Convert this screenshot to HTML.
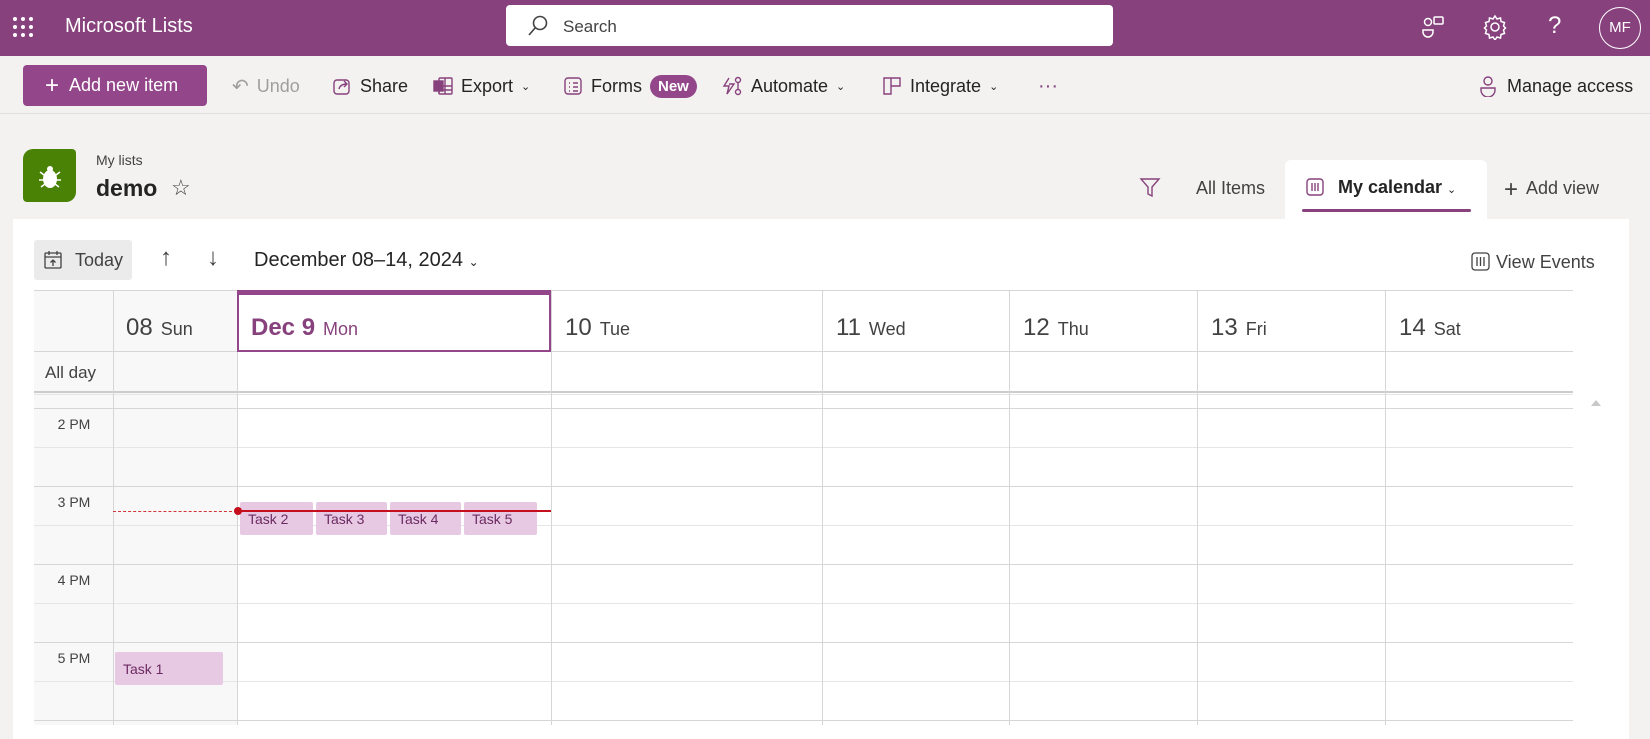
<!DOCTYPE html>
<html><head><meta charset="utf-8"><style>
*{box-sizing:border-box;margin:0;padding:0}
body{width:1650px;height:725px;overflow:hidden;background:#f3f2f1;font-family:"Liberation Sans",sans-serif;color:#242424;position:relative}
.a{position:absolute}
.hdr{left:0;top:0;width:1650px;height:56px;background:#87417c}
.tb{left:0;top:56px;width:1650px;height:58px;background:#f3f2f1;border-bottom:1px solid #e1dfdd}
.ti{top:72px;font-size:18px;color:#242424;display:flex;align-items:center;gap:8px;height:28px}
.panel{left:13px;top:219px;width:1616px;height:520px;background:#fff}
.hl{height:1px;background:#d6d6d6}
.vl{width:1px;background:#d6d6d6}
.day{top:314px;font-size:24px;color:#424242}
.day span{font-size:18px;margin-left:8px}
.tm{font-size:14px;color:#424242;width:80px;text-align:center;left:34px}
.task{background:#e8c9e3;color:#6b2a62;font-size:14px;padding:9px 0 0 8px;height:33px;border-radius:2px}
</style></head><body>
<div class="a hdr"></div>
<svg class="a" style="left:12px;top:16px" width="22" height="22"><g fill="#fff"><circle cx="3" cy="3" r="2"/><circle cx="11" cy="3" r="2"/><circle cx="19" cy="3" r="2"/><circle cx="3" cy="11" r="2"/><circle cx="11" cy="11" r="2"/><circle cx="19" cy="11" r="2"/><circle cx="3" cy="19" r="2"/><circle cx="11" cy="19" r="2"/><circle cx="19" cy="19" r="2"/></g></svg>
<div class="a" style="left:65px;top:15px;color:#fff;font-size:20px">Microsoft Lists</div>
<div class="a" style="left:506px;top:5px;width:607px;height:41px;background:#fff;border-radius:4px"></div>
<svg class="a" style="left:527px;top:15px" width="22" height="22" fill="none" stroke="#424242" stroke-width="1.6"><circle cx="13" cy="8" r="6.5"/><path d="M8.5 12.5 2 20"/></svg>
<div class="a" style="left:563px;top:17px;font-size:17px;color:#424242">Search</div>
<svg class="a" style="left:1421px;top:14px" width="26" height="26" fill="none" stroke="#fff" stroke-width="1.5"><circle cx="7" cy="8" r="3.5"/><path d="M2 16h10v2a5 5 0 0 1-10 0z"/><rect x="13" y="3" width="9" height="7" rx="1"/></svg>
<svg class="a" style="left:1482px;top:14px" width="26" height="26" fill="none" stroke="#fff" stroke-width="1.5"><circle cx="13" cy="13" r="4"/><path d="M13 2l2 3 3.5-1 .5 3.5 3.5 1-1 3.5 2 2-2 2 1 3.5-3.5 1-.5 3.5-3.5-1-2 3-2-3-3.5 1-.5-3.5-3.5-1 1-3.5-2-2 2-2-1-3.5 3.5-1 .5-3.5 3.5 1z"/></svg>
<div class="a" style="left:1548px;top:12px;color:#fff;font-size:24px">?</div>
<div class="a" style="left:1599px;top:7px;width:42px;height:42px;border:1.5px solid #fff;border-radius:50%;color:#fff;font-size:15px;text-align:center;line-height:39px">MF</div>

<div class="a tb"></div>
<div class="a" style="left:23px;top:65px;width:184px;height:41px;background:#93468a;border-radius:4px;color:#fff;font-size:18px;line-height:41px;padding-left:22px"><span style="font-size:24px;vertical-align:-2px;margin-right:10px">+</span>Add new item</div>
<div class="a ti" style="left:232px;color:#a19f9d"><span style="font-size:20px">↶</span>Undo</div>
<div class="a ti" style="left:332px"><svg width="20" height="20" fill="none" stroke="#87417c" stroke-width="1.4"><rect x="2" y="4" width="15" height="14" rx="3"/><path d="M7 13c1-4 4-5 8-5M12 5l3 3-3 3"/></svg>Share</div>
<div class="a ti" style="left:433px"><svg width="20" height="20" fill="none" stroke="#87417c" stroke-width="1.4"><rect x="6" y="2" width="13" height="16" rx="1"/><rect x="1" y="5" width="9" height="10" fill="#87417c"/><path d="M6 6v12M12 2v16M6 10h13M6 14h13"/></svg>Export <span style="font-size:11px">⌄</span></div>
<div class="a ti" style="left:563px"><svg width="20" height="20" fill="none" stroke="#87417c" stroke-width="1.4"><rect x="2" y="2" width="16" height="16" rx="3"/><path d="M6 7h1M10 7h5M6 11h1M10 11h5M6 15h1M10 15h5"/></svg>Forms<span style="background:#93468a;color:#fff;font-size:15px;font-weight:bold;border-radius:12px;padding:3px 8px">New</span></div>
<div class="a ti" style="left:721px"><svg width="22" height="20" fill="none" stroke="#87417c" stroke-width="1.4"><path d="M8 2 3 10h5l-2 8 7-10H8"/><circle cx="17" cy="4" r="2.5"/><circle cx="17" cy="16" r="2.5"/><path d="M17 7v6"/></svg>Automate <span style="font-size:11px">⌄</span></div>
<div class="a ti" style="left:882px"><svg width="20" height="20" fill="none" stroke="#87417c" stroke-width="1.4"><path d="M2 2h7v16H2zM9 2h9v8H9z"/></svg>Integrate <span style="font-size:11px">⌄</span></div>
<div class="a ti" style="left:1038px;color:#87417c;font-size:20px">···</div>
<div class="a ti" style="left:1477px"><svg width="22" height="22" fill="none" stroke="#87417c" stroke-width="1.4"><circle cx="11" cy="6" r="4"/><path d="M4 13h14v2a7 7 0 0 1-14 0z"/></svg>Manage access</div>

<div class="a" style="left:23px;top:149px;width:53px;height:53px;background:#498205;border-radius:10px 4px 10px 4px"></div>
<svg class="a" style="left:38px;top:162px" width="24" height="28" fill="#fff"><ellipse cx="12" cy="17" rx="7" ry="9"/><circle cx="12" cy="7" r="3"/><path d="M2 10l4 3M22 10l-4 3M1 18h5M23 18h-5M3 25l4-3M21 25l-4-3" stroke="#fff" stroke-width="1.5"/></svg>
<div class="a" style="left:96px;top:152px;font-size:14px;color:#424242">My lists</div>
<div class="a" style="left:96px;top:175px;font-size:23px;font-weight:bold">demo</div>
<div class="a" style="left:171px;top:175px;font-size:22px;color:#424242">☆</div>

<svg class="a" style="left:1139px;top:176px" width="22" height="22" fill="none" stroke="#87417c" stroke-width="1.4"><path d="M2 3h18l-7 8v9l-4-2v-7z"/></svg>
<div class="a" style="left:1196px;top:178px;font-size:18px;color:#424242">All Items</div>
<div class="a" style="left:1285px;top:160px;width:202px;height:65px;background:#fff;border-radius:6px 6px 0 0"></div>
<svg class="a" style="left:1305px;top:177px" width="20" height="20" fill="none" stroke="#87417c" stroke-width="1.4"><rect x="2" y="2" width="16" height="16" rx="3"/><path d="M7 6v8M10 6v8M13 6v8"/></svg>
<div class="a" style="left:1338px;top:177px;font-size:18px;font-weight:bold">My calendar <span style="font-size:11px;font-weight:normal">⌄</span></div>
<div class="a" style="left:1302px;top:209px;width:169px;height:3px;background:#87417c;border-radius:2px"></div>
<div class="a" style="left:1504px;top:176px;font-size:18px;color:#424242"><span style="font-size:24px;vertical-align:-3px;margin-right:8px;font-weight:300">+</span>Add view</div>

<div class="a panel"></div>
<div class="a" style="left:34px;top:240px;width:98px;height:40px;background:#ebebeb;border-radius:3px"></div>
<svg class="a" style="left:43px;top:250px" width="20" height="20" fill="none" stroke="#424242" stroke-width="1.3"><rect x="2" y="3" width="16" height="15" rx="1"/><path d="M2 7h16M6 1v4M14 1v4M10 16v-6M7.5 12.5 10 10l2.5 2.5"/></svg>
<div class="a" style="left:75px;top:250px;font-size:18px;color:#424242">Today</div>
<div class="a" style="left:160px;top:244px;font-size:24px;color:#424242">↑</div>
<div class="a" style="left:207px;top:244px;font-size:24px;color:#424242">↓</div>
<div class="a" style="left:254px;top:249px;font-size:20px">December 08–14, 2024 <span style="font-size:12px">⌄</span></div>
<svg class="a" style="left:1471px;top:252px" width="20" height="20" fill="none" stroke="#424242" stroke-width="1.3"><rect x="1" y="1" width="17" height="17" rx="3"/><path d="M6 5v9M9.5 5v9M13 5v9"/></svg>
<div class="a" style="left:1496px;top:252px;font-size:18px;color:#424242">View Events</div>

<!-- grid -->
<div class="a" style="left:34px;top:290px;width:203px;height:435px;background:#f8f8f8"></div>
<div class="a hl" style="left:34px;top:290px;width:1539px"></div>
<div class="a hl" style="left:34px;top:351px;width:1539px"></div>
<div class="a hl" style="left:34px;top:391px;width:1539px;height:2px;background:#ccc"></div>
<div class="a hl" style="left:34px;top:394px;width:1539px;background:#e6e6e6"></div>
<div class="a hl" style="left:34px;top:408px;width:1539px"></div>
<div class="a hl" style="left:34px;top:447px;width:1539px;background:#e6e6e6"></div>
<div class="a hl" style="left:34px;top:486px;width:1539px"></div>
<div class="a hl" style="left:34px;top:525px;width:1539px;background:#e6e6e6"></div>
<div class="a hl" style="left:34px;top:564px;width:1539px"></div>
<div class="a hl" style="left:34px;top:603px;width:1539px;background:#e6e6e6"></div>
<div class="a hl" style="left:34px;top:642px;width:1539px"></div>
<div class="a hl" style="left:34px;top:681px;width:1539px;background:#e6e6e6"></div>
<div class="a hl" style="left:34px;top:720px;width:1539px"></div>
<div class="a vl" style="left:113px;top:290px;height:435px"></div>
<div class="a vl" style="left:237px;top:290px;height:435px"></div>
<div class="a vl" style="left:551px;top:290px;height:435px"></div>
<div class="a vl" style="left:822px;top:290px;height:435px"></div>
<div class="a vl" style="left:1009px;top:290px;height:435px"></div>
<div class="a vl" style="left:1197px;top:290px;height:435px"></div>
<div class="a vl" style="left:1385px;top:290px;height:435px"></div>
<div class="a" style="left:237px;top:290px;width:314px;height:62px;background:#fff;border:2px solid #93468a;border-top:5px solid #93468a"></div>

<div class="a day" style="left:126px">08<span>Sun</span></div>
<div class="a day" style="left:251px;color:#87417c;font-weight:bold">Dec 9<span style="font-weight:normal;color:#87417c">Mon</span></div>
<div class="a day" style="left:565px">10<span>Tue</span></div>
<div class="a day" style="left:836px">11<span>Wed</span></div>
<div class="a day" style="left:1023px">12<span>Thu</span></div>
<div class="a day" style="left:1211px">13<span>Fri</span></div>
<div class="a day" style="left:1399px">14<span>Sat</span></div>
<div class="a" style="left:45px;top:363px;font-size:17px;color:#424242">All day</div>
<div class="a tm" style="top:416px">2 PM</div>
<div class="a tm" style="top:494px">3 PM</div>
<div class="a tm" style="top:572px">4 PM</div>
<div class="a tm" style="top:650px">5 PM</div>

<div class="a task" style="left:240px;top:502px;width:73px">Task 2</div>
<div class="a task" style="left:316px;top:502px;width:71px">Task 3</div>
<div class="a task" style="left:390px;top:502px;width:71px">Task 4</div>
<div class="a task" style="left:464px;top:502px;width:73px">Task 5</div>
<div class="a task" style="left:115px;top:652px;width:108px">Task 1</div>
<div class="a" style="left:113px;top:511px;width:124px;border-top:1px dashed #d13438"></div>
<div class="a" style="left:237px;top:510px;width:314px;height:2px;background:#c50f1f"></div>
<div class="a" style="left:234px;top:507px;width:8px;height:8px;border-radius:50%;background:#c50f1f"></div>
<div class="a" style="left:1591px;top:400px;width:0;height:0;border-left:5px solid transparent;border-right:5px solid transparent;border-bottom:6px solid #c8c8c8"></div>
</body></html>
